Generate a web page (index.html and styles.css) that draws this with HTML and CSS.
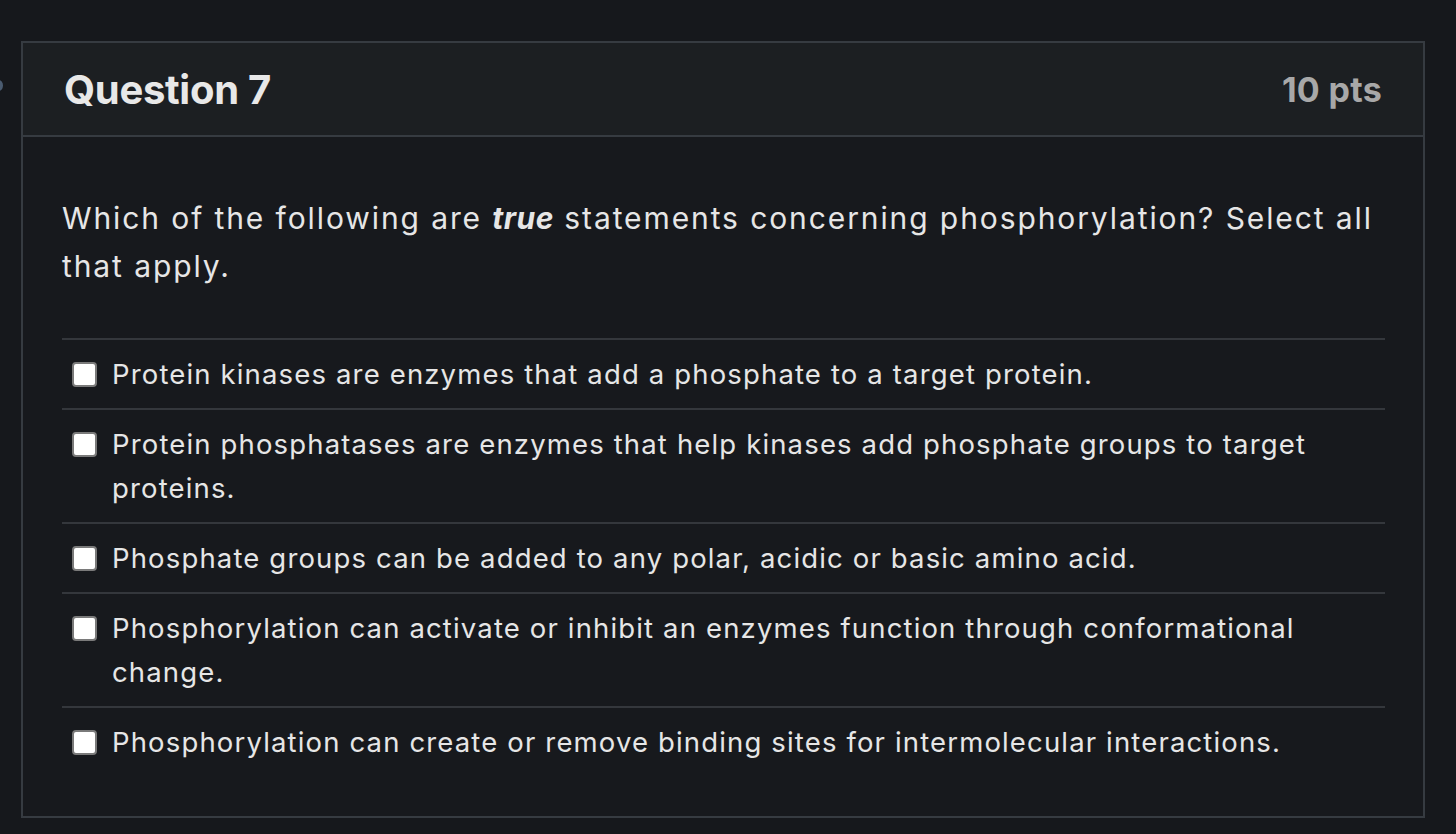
FILE: index.html
```html
<!DOCTYPE html>
<html>
<head>
<meta charset="utf-8">
<link rel="stylesheet" href="styles.css">
</head>
<body>
<div class="page">
  <span class="dot"></span>
  <div class="card">
    <div class="card-header">
      <h2 class="title">Question 7</h2>
      <span class="pts">10 pts</span>
    </div>
    <div class="card-body">
      <p class="question">Which of the following are <em class="true">true</em> statements concerning phosphorylation? Select all that apply.</p>
      <div class="answers">
        <label class="answer"><span class="box"></span><span class="txt">Protein kinases are enzymes that add a phosphate to a target protein.</span></label>
        <label class="answer"><span class="box"></span><span class="txt">Protein phosphatases are enzymes that help kinases add phosphate groups to target proteins.</span></label>
        <label class="answer"><span class="box"></span><span class="txt">Phosphate groups can be added to any polar, acidic or basic amino acid.</span></label>
        <label class="answer"><span class="box"></span><span class="txt">Phosphorylation can activate or inhibit an enzymes function through conformational change.</span></label>
        <label class="answer"><span class="box"></span><span class="txt">Phosphorylation can create or remove binding sites for intermolecular interactions.</span></label>
      </div>
    </div>
  </div>
</div>
</body>
</html>
```

FILE: styles.css
```css
html, body {
  margin: 0;
  padding: 0;
  background: #16181c;
}
body {
  font-family: Inter, "Open Sans", sans-serif;
  color: #e4e4e4;
  width: 1456px;
  height: 834px;
  overflow: hidden;
}
.page {
  position: relative;
  padding: 41px 31px 0 21px;
}
.dot {
  position: absolute;
  left: -6px;
  top: 80px;
  width: 9px;
  height: 11px;
  border-radius: 50%;
  background: #4a5b70;
}
.card {
  border: 2px solid #363b41;
  background: #17191d;
  height: 777px;
  box-sizing: border-box;
}
.card-header {
  display: flex;
  justify-content: space-between;
  align-items: center;
  background: #1c1f22;
  border-bottom: 2px solid #363b41;
  height: 94px;
  box-sizing: border-box;
  padding: 0 41px 0 41px;
}
.title {
  margin: 0;
  font-size: 40px;
  font-weight: 700;
  color: #e8e8e8;
  letter-spacing: -0.3px;
}
.pts {
  font-size: 34px;
  font-weight: 700;
  color: #a8a8a8;
  letter-spacing: 0.3px;
}
.card-body {
  padding: 57px 38px 0 39px;
}
.question {
  margin: 0 0 48px 0;
  font-size: 30px;
  line-height: 48px;
  letter-spacing: 1.9px;
  color: #e6e6e6;
}
.true {
  font-weight: 700;
  font-style: italic;
  letter-spacing: 0.5px;
}
.answers {
  display: flex;
  flex-direction: column;
}
.answer {
  display: flex;
  align-items: flex-start;
  gap: 15px;
  padding: 12px 0 12px 10px;
  border-top: 2px solid #34373c;
  font-size: 27.5px;
  line-height: 44px;
  letter-spacing: 1.15px;
}
.box {
  flex: none;
  width: 21px;
  height: 21px;
  margin-top: 10px;
  background: #ffffff;
  border: 2px solid #7a7a7a;
  border-radius: 4px;
}
.txt {
  color: #e6e6e6;
}
```
